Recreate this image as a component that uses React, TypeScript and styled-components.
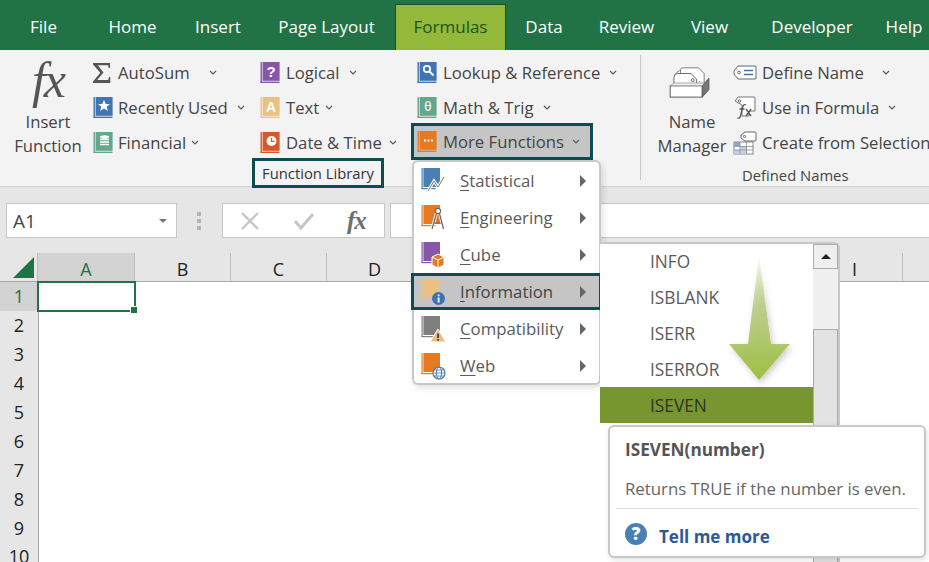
import React, { ReactNode } from 'react';
import styled, { createGlobalStyle } from 'styled-components';

const GlobalStyle = createGlobalStyle`
  html, body { margin: 0; padding: 0; overflow: hidden; }
  body { width: 929px; height: 562px; font-family: "Open Sans", "Liberation Sans", sans-serif; color: #444; }
`;

const Page = styled.div`
  position: relative;
  width: 929px;
  height: 562px;
  overflow: hidden;
  background: #fff;
  display: flex;
  flex-direction: column;
`;

const TabBar = styled.div`
  height: 50px;
  background: #217346;
  display: flex;
  align-items: flex-end;
  flex: none;
`;

const Tab = styled.div<{ $w: number; $active?: boolean }>`
  width: ${(p) => p.$w}px;
  height: ${(p) => (p.$active ? 46 : 50)}px;
  flex: none;
  display: flex;
  align-items: center;
  justify-content: center;
  padding-top: ${(p) => (p.$active ? 0 : 3)}px;
  padding-bottom: ${(p) => (p.$active ? 3 : 0)}px;
  box-sizing: border-box;
  font-size: 17px;
  white-space: nowrap;
  color: ${(p) => (p.$active ? '#17551f' : '#fff')};
  background: ${(p) => (p.$active ? '#93b83a' : 'transparent')};
  border: ${(p) => (p.$active ? '1px solid #14522f' : 'none')};
  border-bottom: none;
`;

const Ribbon = styled.div`
  height: 137px;
  flex: none;
  box-sizing: border-box;
  background: #f3f3f3;
  border-bottom: 1px solid #d4d4d4;
  display: flex;
  position: relative;
`;

const BigButton = styled.div<{ $w: number; $ml: number }>`
  width: ${(p) => p.$w}px;
  margin-left: ${(p) => p.$ml}px;
  flex: none;
  display: flex;
  flex-direction: column;
  align-items: center;
  font-size: 16.7px;
  line-height: 24px;
  color: #444;
  white-space: nowrap;
`;

const BigIcon = styled.div<{ $top?: number }>`
  height: 60px;
  box-sizing: border-box;
  padding-top: ${(p) => p.$top ?? 0}px;
  display: flex;
  align-items: center;
  justify-content: center;
`;

const FxGlyph = styled.span`
  font-family: "Liberation Serif", serif;
  font-style: italic;
  font-size: 50px;
  line-height: 60px;
  color: #555;
  letter-spacing: -2px;
`;

const Column = styled.div<{ $w: number; $ml?: number }>`
  width: ${(p) => p.$w}px;
  margin-left: ${(p) => p.$ml ?? 0}px;
  flex: none;
  padding-top: 5px;
  display: flex;
  flex-direction: column;
`;

const Cmd = styled.div`
  height: 35px;
  display: flex;
  align-items: center;
  font-size: 16.7px;
  color: #444;
  white-space: nowrap;
`;

const CmdIcon = styled.span<{ $w?: number }>`
  width: ${(p) => p.$w ?? 25}px;
  height: 24px;
  flex: none;
  display: flex;
  align-items: center;
`;

const Chevron = styled.svg<{ $ml: number }>`
  margin-left: ${(p) => p.$ml}px;
  width: 8px;
  height: 5px;
  flex: none;
`;

const Separator = styled.div`
  width: 1px;
  height: 125px;
  margin: 5px 0 0 0;
  background: #c8c8c8;
  flex: none;
`;

const GroupLabel = styled.div<{ $left: number }>`
  position: absolute;
  left: ${(p) => p.$left}px;
  top: 115px;
  font-size: 14.8px;
  line-height: 20px;
  color: #444;
  white-space: nowrap;
`;

const Callout = styled.div`
  position: absolute;
  left: 252px;
  top: 108px;
  width: 132px;
  height: 30px;
  box-sizing: border-box;
  border: 3px solid #0f4c52;
  font-size: 14.8px;
  display: flex;
  align-items: center;
  justify-content: center;
  color: #333;
  white-space: nowrap;
`;

const MoreFunctions = styled.div`
  position: absolute;
  left: 411px;
  top: 73px;
  width: 182px;
  height: 37px;
  box-sizing: border-box;
  padding-left: 3px;
  border: 3px solid #0f4c52;
  background: #c5c5c5;
  display: flex;
  align-items: center;
  font-size: 16.7px;
  color: #444;
  white-space: nowrap;
`;

const FormulaStrip = styled.div`
  height: 66px;
  flex: none;
  background: #e6e6e6;
  display: flex;
  align-items: flex-start;
  padding-top: 16px;
  box-sizing: border-box;
`;

const NameBox = styled.div`
  width: 171px;
  height: 35px;
  margin-left: 6px;
  box-sizing: border-box;
  flex: none;
  background: #fff;
  border: 1px solid #c6c6c6;
  display: flex;
  align-items: center;
  justify-content: space-between;
  padding: 0 9px 0 6px;
  font-size: 19px;
  color: #444;
`;

const Caret = styled.span`
  width: 0;
  height: 0;
  border-left: 4px solid transparent;
  border-right: 4px solid transparent;
  border-top: 4px solid #777;
`;

const Grip = styled.div`
  width: 4px;
  margin: 9px 21px 0 20px;
  flex: none;
  display: flex;
  flex-direction: column;
  gap: 3px;
  & > span { width: 4px; height: 4px; background: #b4b4b4; }
`;

const FormulaButtons = styled.div`
  width: 163px;
  height: 35px;
  box-sizing: border-box;
  flex: none;
  background: #fff;
  border: 1px solid #c6c6c6;
  display: flex;
  align-items: center;
  padding-left: 18px;
  gap: 35px;
`;

const SmallFx = styled.span`
  font-family: "Liberation Serif", serif;
  font-style: italic;
  font-weight: bold;
  font-size: 25px;
  letter-spacing: -1px;
  color: #6e6e6e;
  margin-left: -2px;
`;

const FormulaInput = styled.div`
  flex: 1;
  height: 35px;
  margin-left: 5px;
  box-sizing: border-box;
  background: #fff;
  border: 1px solid #c6c6c6;
  border-right: none;
`;

const Sheet = styled.div`
  flex: 1;
  display: flex;
  flex-direction: column;
  min-height: 0;
`;

const HeaderRow = styled.div`
  height: 29px;
  flex: none;
  background: #e6e6e6;
  border-bottom: 1px solid #a8a8a8;
  box-sizing: border-box;
  display: flex;
`;

const Corner = styled.div`
  width: 38px;
  flex: none;
  border-right: 1px solid #bdbdbd;
  box-sizing: border-box;
  display: flex;
  align-items: flex-end;
  justify-content: flex-end;
  padding: 0 3px 3px 0;
`;

const ColHead = styled.div<{ $active?: boolean }>`
  width: ${(p) => (p.$active ? 97 : 96)}px;
  flex: none;
  box-sizing: border-box;
  padding-top: 3px;
  display: flex;
  align-items: center;
  justify-content: center;
  font-size: 18px;
  color: ${(p) => (p.$active ? '#1f6e45' : '#222')};
  background: ${(p) => (p.$active ? '#d2d2d2' : 'transparent')};
  border-right: 1px solid #bdbdbd;
`;

const Rows = styled.div`
  flex: 1;
  position: relative;
  display: flex;
  flex-direction: column;
  width: 38px;
  background: #e6e6e6;
  border-right: 1px solid #a8a8a8;
`;

const RowHead = styled.div<{ $active?: boolean }>`
  height: 28.9px;
  flex: none;
  display: flex;
  align-items: center;
  justify-content: center;
  font-size: 18px;
  color: ${(p) => (p.$active ? '#1f6e45' : '#222')};
  background: ${(p) => (p.$active ? '#d2d2d2' : 'transparent')};
`;

const SelectedCell = styled.div`
  position: absolute;
  left: 37px;
  top: 281px;
  width: 99px;
  height: 31px;
  box-sizing: border-box;
  border: 2px solid #217346;
  &::after {
    content: '';
    position: absolute;
    right: -4px;
    bottom: -4px;
    width: 6px;
    height: 6px;
    background: #217346;
    border: 1px solid #fff;
  }
`;

const Menu = styled.div`
  position: absolute;
  left: 412px;
  top: 160px;
  width: 189px;
  height: 225px;
  box-sizing: border-box;
  background: #fff;
  border: 2px solid #c8c8c8;
  border-radius: 6px;
  box-shadow: 2px 3px 6px rgba(0, 0, 0, 0.12);
  display: flex;
  flex-direction: column;
`;

const MenuItem = styled.div<{ $active?: boolean }>`
  height: 37px;
  flex: none;
  box-sizing: border-box;
  display: flex;
  align-items: center;
  font-size: 16.8px;
  color: #5a5a5a;
  padding-left: 7px;
  ${(p) =>
    p.$active &&
    `
    background: #c5c5c5;
    outline: 3px solid #0f4c52;
    outline-offset: -3px;
    margin: 0 -3px;
    padding-left: 10px;
    color: #444;
  `}
`;

const MenuIcon = styled.span`
  width: 39px;
  height: 28px;
  flex: none;
  display: flex;
  align-items: center;
`;

const MenuLabel = styled.span`
  flex: 1;
  white-space: nowrap;
  & > u { text-underline-offset: 3px; text-decoration-thickness: 1px; }
`;

const MenuArrow = styled.span<{ $active?: boolean }>`
  width: 0;
  height: 0;
  margin-right: ${(p) => (p.$active ? 16 : 13)}px;
  border-top: 6px solid transparent;
  border-bottom: 6px solid transparent;
  border-left: 6px solid #666;
`;

const SubMenu = styled.div`
  position: absolute;
  left: 600px;
  top: 242px;
  width: 240px;
  height: 330px;
  box-sizing: border-box;
  background: #fff;
  border: 2px solid #c8c8c8;
  border-left: none;
  border-radius: 0 6px 0 0;
  display: flex;
`;

const SubList = styled.div`
  width: 213px;
  flex: none;
  margin-top: -1px;
  display: flex;
  flex-direction: column;
`;

const SubItem = styled.div<{ $active?: boolean }>`
  height: 36px;
  flex: none;
  box-sizing: border-box;
  padding-left: 50px;
  display: flex;
  align-items: center;
  font-size: 17.3px;
  color: ${(p) => (p.$active ? '#2c3320' : '#5a5a5a')};
  background: ${(p) => (p.$active ? '#78962f' : 'transparent')};
`;

const ScrollBar = styled.div`
  width: 25px;
  flex: none;
  background: #f0f0f0;
  display: flex;
  flex-direction: column;
`;

const ScrollButton = styled.div`
  height: 25px;
  flex: none;
  box-sizing: border-box;
  background: #efefef;
  border: 1px solid #ababab;
  display: flex;
  align-items: center;
  justify-content: center;
  &::before {
    content: '';
    border-left: 5px solid transparent;
    border-right: 5px solid transparent;
    border-bottom: 5px solid #222;
  }
`;

const ScrollThumb = styled.div`
  margin-top: 60px;
  flex: 1;
  background: #e3e3e3;
  border: 1px solid #ababab;
`;

const DownArrow = styled.svg`
  position: absolute;
  left: 720px;
  top: 250px;
  width: 80px;
  height: 140px;
`;

const Tip = styled.div`
  position: absolute;
  left: 608px;
  top: 425px;
  width: 318px;
  height: 133px;
  box-sizing: border-box;
  background: #fff;
  border: 2px solid #c8c8c8;
  border-radius: 6px;
  box-shadow: 1px 2px 5px rgba(0, 0, 0, 0.12);
  padding: 12px 6px 0 6px;
  display: flex;
  flex-direction: column;
`;

const TipTitle = styled.div`
  font-size: 17.2px;
  font-weight: 700;
  line-height: 22px;
  color: #555;
  padding-left: 9px;
`;

const TipBody = styled.div`
  font-size: 16.8px;
  line-height: 22px;
  margin-top: 17px;
  color: #666;
  padding-left: 9px;
  white-space: nowrap;
`;

const TipRule = styled.div`
  height: 1px;
  margin-top: 8px;
  background: #dedede;
`;

const TipLink = styled.div`
  display: flex;
  align-items: center;
  gap: 12px;
  margin-top: 11px;
  padding-left: 9px;
  font-size: 17px;
  font-weight: 700;
  color: #2a5a97;
  & > b { font-weight: 700; padding-top: 5px; }
`;

const HelpBadge = styled.span`
  width: 22px;
  height: 22px;
  flex: none;
  border-radius: 50%;
  background: #4a7fb5;
  color: #fff;
  font-size: 17px;
  font-weight: 800;
  line-height: 22px;
  text-align: center;
`;

const DrawerSvg = styled.svg`
  margin-right: 5px;
`;

const Book = ({ color, children, w = 20 }: { color: string; children?: ReactNode; w?: number }) => (
  <svg width={w} height="24" viewBox="0 0 20 24">
    <rect x="0.5" y="1" width="1.4" height="21" fill={color} />
    <rect x="0.5" y="20.6" width="19" height="1.4" fill={color} />
    <rect x="2.6" y="1" width="17" height="18.8" fill={color} />
    {children}
  </svg>
);

const Down = ({ ml }: { ml: number }) => (
  <Chevron $ml={ml} viewBox="0 0 8 5">
    <path d="M1 1l3 3 3-3" fill="none" stroke="#555" strokeWidth="1.1" />
  </Chevron>
);

const SigmaIcon = () => (
  <svg width="18" height="20" viewBox="0 0 18 20">
    <path d="M0 0h17v5h-1.300l-.6-2.800H4.800L10.500 9.500 4.200 17h11l.8-3H17.300v6H0v-1.500L7.300 9.800 0 1.500z" fill="#555" />
  </svg>
);

const TagDrawer = () => (
  <DrawerSvg width="42" height="34" viewBox="0 0 44 36">
    <path d="M7 18V11q0-4 4-5h16l5 5v7" fill="#fff" stroke="#777" />
    <path d="M12 9V5q0-2 3-2h16l6 6v10" fill="#fff" stroke="#777" />
    <path d="M5 21v-8q0-4 4-4h14l6 6v6" fill="#fff" stroke="#666" />
    <circle cx="25" cy="16" r="1.600" fill="none" stroke="#666" />
    <rect x="1" y="22" width="34" height="12" fill="#fff" stroke="#555" />
    <path d="M35 22l7-8v12l-7 8z" fill="#777" stroke="#555" />
    <path d="M1 22l4-3h32l-2 3z" fill="#eee" stroke="#777" strokeWidth=".6" />
  </DrawerSvg>
);

const NameTag = () => (
  <svg width="24" height="24" viewBox="0 0 24 24">
    <path d="M5 5h17q1 0 1 1v11q0 1-1 1H5l-4-5v-3z" fill="#fff" stroke="#666" />
    <circle cx="6" cy="11.500" r="1.300" fill="none" stroke="#666" />
    <path d="M11 9.500h9M11 13.500h9" stroke="#3d72b4" strokeWidth="1.300" />
  </svg>
);

const UseFormula = () => (
  <svg width="24" height="24" viewBox="0 0 24 24">
    <path d="M5 1h16q1 0 1 1v13h-6v5H9V9L2 5z" fill="#fff" stroke="#777" />
    <circle cx="6.500" cy="5" r="1.200" fill="none" stroke="#666" />
    <path d="M13 9c-2-1-3 0-3.500 3l-2 8c-.4 2-2 2.500-3 2M6.500 13h5M13 13l5 7M18 13l-5 7" fill="none" stroke="#555" strokeWidth="1.300" />
  </svg>
);

const CreateSelection = () => (
  <svg width="24" height="24" viewBox="0 0 24 24">
    <rect x="1" y="11" width="19" height="12" fill="#fff" stroke="#888" />
    <rect x="1" y="11" width="6" height="4" fill="#8aa8cf" />
    <rect x="7.500" y="15.500" width="6" height="3.500" fill="#bcd0e6" />
    <rect x="1" y="19" width="6" height="4" fill="#bcd0e6" />
    <rect x="7.500" y="19.500" width="6" height="3.500" fill="#bcd0e6" />
    <path d="M7 11v12M13.500 11v12M1 15.500h19M1 19h19" stroke="#888" strokeWidth=".8" />
    <path d="M12 1h10q1 0 1 1v7q0 1-1 1H12l-4-3V4z" fill="#fff" stroke="#666" />
    <circle cx="11.500" cy="5.500" r="1.100" fill="none" stroke="#666" />
  </svg>
);

const glyphText = { fontFamily: '"Liberation Sans", sans-serif', fontWeight: 700 };

const menuBadges: Record<string, ReactNode> = {
  Statistical: (
    <>
      <path d="M7 24l6-10 4 6 6-10" fill="none" stroke="#fff" strokeWidth="3" />
      <path d="M7 24l6-10 4 6 6-10" fill="none" stroke="#777" strokeWidth="1" />
    </>
  ),
  Engineering: (
    <>
      <path d="M15.500 9L11 25M18.500 9l4 16" fill="none" stroke="#fff" strokeWidth="3" />
      <circle cx="17" cy="7" r="2.600" fill="#fff" stroke="#666" strokeWidth="1.100" />
      <path d="M15.500 9.500L11 25M18.500 9.500l4 15.500M12.500 19h8" fill="none" stroke="#666" strokeWidth="1.200" />
    </>
  ),
  Cube: (
    <>
      <path d="M17 13l6 3v8l-6 3-6-3v-8z" fill="#e57a23" stroke="#fff" />
      <path d="M11 16l6 3 6-3M17 19v8" fill="none" stroke="#fff" />
    </>
  ),
  Information: (
    <>
      <circle cx="17.500" cy="20.500" r="6.500" fill="#3d72b4" />
      <rect x="16.700" y="19.500" width="1.800" height="5" fill="#fff" />
      <rect x="16.700" y="16.500" width="1.800" height="1.800" fill="#fff" />
    </>
  ),
  Compatibility: (
    <>
      <path d="M17 14l8 13H9z" fill="#e9bf7d" stroke="#fff" />
      <rect x="16.200" y="18.500" width="1.800" height="4.500" fill="#444" />
      <rect x="16.200" y="24" width="1.800" height="1.800" fill="#444" />
    </>
  ),
  Web: (
    <>
      <circle cx="18" cy="21" r="6" fill="#fff" stroke="#4a7fb5" strokeWidth="1.200" />
      <ellipse cx="18" cy="21" rx="2.600" ry="6" fill="none" stroke="#4a7fb5" />
      <path d="M12 21h12M13 18h10M13 24h10" stroke="#4a7fb5" strokeWidth=".8" />
    </>
  ),
};

const MenuBook = ({ name, color }: { name: string; color: string }) => (
  <svg width="26" height="28" viewBox="0 0 26 28">
    <rect x="0.500" y="1" width="1.200" height="21" fill={color} />
    <rect x="0.500" y="21" width="14" height="1.200" fill={color} />
    <rect x="2.400" y="1" width="16.600" height="19" fill={color} />
    {menuBadges[name]}
  </svg>
);

const tabs = [
  { label: 'File', w: 87 },
  { label: 'Home', w: 91 },
  { label: 'Insert', w: 80 },
  { label: 'Page Layout', w: 137 },
];
const tabsRight = [
  { label: 'Data', w: 76 },
  { label: 'Review', w: 89 },
  { label: 'View', w: 77 },
  { label: 'Developer', w: 128 },
  { label: 'Help', w: 56 },
];

const menuItems = [
  { name: 'Statistical', key: 'S', color: '#4a7fb5' },
  { name: 'Engineering', key: 'E', color: '#e57a23' },
  { name: 'Cube', key: 'C', color: '#8557a8' },
  { name: 'Information', key: 'I', color: '#e9c283' },
  { name: 'Compatibility', key: 'C', color: '#7f7f7f' },
  { name: 'Web', key: 'W', color: '#e57a23' },
];

const functionNames = ['INFO', 'ISBLANK', 'ISERR', 'ISERROR', 'ISEVEN'];
const columns = ['A', 'B', 'C', 'D', 'E', 'F', 'G', 'H', 'I', 'J'];
const rowNumbers = [1, 2, 3, 4, 5, 6, 7, 8, 9, 10];

export default function App() {
  return (
    <Page>
      <GlobalStyle />
      <TabBar>
        {tabs.map((t) => (
          <Tab key={t.label} $w={t.w}>{t.label}</Tab>
        ))}
        <Tab $w={111} $active>Formulas</Tab>
        {tabsRight.map((t) => (
          <Tab key={t.label} $w={t.w}>{t.label}</Tab>
        ))}
      </TabBar>

      <Ribbon>
        <BigButton $w={68} $ml={14}>
          <BigIcon><FxGlyph>fx</FxGlyph></BigIcon>
          <span>Insert</span>
          <span>Function</span>
        </BigButton>

        <Column $w={167} $ml={11}>
          <Cmd><CmdIcon><SigmaIcon /></CmdIcon>AutoSum<Down ml={19} /></Cmd>
          <Cmd>
            <CmdIcon>
              <Book color="#3f75b2">
                <path d="M11 4l1.800 4h4.200l-3.300 2.700 1.200 4.300-3.900-2.500-3.900 2.500 1.200-4.300-3.300-2.700h4.200z" fill="#fff" />
              </Book>
            </CmdIcon>
            Recently Used<Down ml={9} />
          </Cmd>
          <Cmd>
            <CmdIcon>
              <Book color="#64a78d">
                <ellipse cx="11.500" cy="6" rx="4.500" ry="1.800" fill="#fff" />
                <path d="M7 8.500h9M7 11h9M7 13.500h9" stroke="#fff" strokeWidth="1.300" />
              </Book>
            </CmdIcon>
            Financial<Down ml={5} />
          </Cmd>
        </Column>

        <Column $w={157}>
          <Cmd>
            <CmdIcon $w={26}>
              <Book color="#8557a8">
                <text x="11" y="16" textAnchor="middle" fontSize="15" fill="#fff" style={glyphText}>?</text>
              </Book>
            </CmdIcon>
            Logical<Down ml={9} />
          </Cmd>
          <Cmd>
            <CmdIcon $w={26}>
              <Book color="#e9c283">
                <text x="11" y="16" textAnchor="middle" fontSize="14" fill="#fff" style={glyphText}>A</text>
              </Book>
            </CmdIcon>
            Text<Down ml={6} />
          </Cmd>
          <Cmd>
            <CmdIcon $w={26}>
              <Book color="#d9562b">
                <circle cx="11.500" cy="10" r="5" fill="#fff" />
                <path d="M11.500 7v3.300h3" fill="none" stroke="#d9562b" strokeWidth="1.300" />
              </Book>
            </CmdIcon>
            Date &amp; Time<Down ml={7} />
          </Cmd>
        </Column>

        <Column $w={223}>
          <Cmd>
            <CmdIcon $w={26}>
              <Book color="#3f75b2">
                <circle cx="10" cy="8" r="3.200" fill="none" stroke="#fff" strokeWidth="1.800" />
                <path d="M12.500 10.500l4 4" stroke="#fff" strokeWidth="2.200" />
              </Book>
            </CmdIcon>
            Lookup &amp; Reference<Down ml={9} />
          </Cmd>
          <Cmd>
            <CmdIcon $w={26}>
              <Book color="#64a78d">
                <text x="11" y="15" textAnchor="middle" fontSize="12" fill="#fff" style={{ fontFamily: '"DejaVu Sans", sans-serif' }}>θ</text>
              </Book>
            </CmdIcon>
            Math &amp; Trig<Down ml={9} />
          </Cmd>
        </Column>

        <Separator />

        <BigButton $w={76} $ml={13}>
          <BigIcon $top={3}><TagDrawer /></BigIcon>
          <span>Name</span>
          <span>Manager</span>
        </BigButton>

        <Column $w={190} $ml={3}>
          <Cmd><CmdIcon $w={29}><NameTag /></CmdIcon>Define Name<Down ml={18} /></Cmd>
          <Cmd><CmdIcon $w={29}><UseFormula /></CmdIcon>Use in Formula<Down ml={9} /></Cmd>
          <Cmd><CmdIcon $w={29}><CreateSelection /></CmdIcon>Create from Selection</Cmd>
        </Column>

        <GroupLabel $left={742}>Defined Names</GroupLabel>
        <Callout>Function Library</Callout>
        <MoreFunctions>
          <CmdIcon $w={26}>
            <Book color="#e57a23">
              <path d="M7 10.500h1.800M10.500 10.500h1.800M14 10.500h1.800" stroke="#fff" strokeWidth="1.800" />
            </Book>
          </CmdIcon>
          More Functions<Down ml={8} />
        </MoreFunctions>
      </Ribbon>

      <FormulaStrip>
        <NameBox>A1<Caret /></NameBox>
        <Grip><span /><span /><span /></Grip>
        <FormulaButtons>
          <svg width="18" height="18" viewBox="0 0 18 18">
            <path d="M1 1l16 16M17 1L1 17" stroke="#c6c6c6" strokeWidth="2.400" />
          </svg>
          <svg width="20" height="18" viewBox="0 0 20 18">
            <path d="M1 9l6 7L19 2" fill="none" stroke="#c6c6c6" strokeWidth="3" />
          </svg>
          <SmallFx>fx</SmallFx>
        </FormulaButtons>
        <FormulaInput />
      </FormulaStrip>

      <Sheet>
        <HeaderRow>
          <Corner>
            <svg width="21" height="21" viewBox="0 0 21 21"><path d="M21 0v21H0z" fill="#217346" /></svg>
          </Corner>
          {columns.map((c, i) => (
            <ColHead key={c} $active={i === 0}>{c}</ColHead>
          ))}
        </HeaderRow>
        <Rows>
          {rowNumbers.map((n) => (
            <RowHead key={n} $active={n === 1}>{n}</RowHead>
          ))}
        </Rows>
      </Sheet>
      <SelectedCell />

      <Menu>
        {menuItems.map((m) => {
          const active = m.name === 'Information';
          return (
            <MenuItem key={m.name} $active={active}>
              <MenuIcon><MenuBook name={m.name} color={m.color} /></MenuIcon>
              <MenuLabel><u>{m.key}</u>{m.name.slice(1)}</MenuLabel>
              <MenuArrow $active={active} />
            </MenuItem>
          );
        })}
      </Menu>

      <SubMenu>
        <SubList>
          {functionNames.map((f) => (
            <SubItem key={f} $active={f === 'ISEVEN'}>{f}</SubItem>
          ))}
        </SubList>
        <ScrollBar>
          <ScrollButton />
          <ScrollThumb />
        </ScrollBar>
      </SubMenu>

      <DownArrow viewBox="0 0 80 140">
        <defs>
          <linearGradient id="arrowFill" x1="0" y1="0" x2="0" y2="1">
            <stop offset="0" stopColor="#9dbb45" stopOpacity="0" />
            <stop offset="0.45" stopColor="#b2c87a" stopOpacity="0.85" />
            <stop offset="1" stopColor="#9dc040" />
          </linearGradient>
          <filter id="arrowShadow" x="-30%" y="-10%" width="160%" height="130%">
            <feDropShadow dx="2" dy="3" stdDeviation="3" floodColor="#000" floodOpacity="0.22" />
          </filter>
        </defs>
        <path d="M39 5L51 94h19L39 130 9 94h19z" fill="url(#arrowFill)" filter="url(#arrowShadow)" />
      </DownArrow>

      <Tip>
        <TipTitle>ISEVEN(number)</TipTitle>
        <TipBody>Returns TRUE if the number is even.</TipBody>
        <TipRule />
        <TipLink><HelpBadge>?</HelpBadge><b>Tell me more</b></TipLink>
      </Tip>
    </Page>
  );
}
